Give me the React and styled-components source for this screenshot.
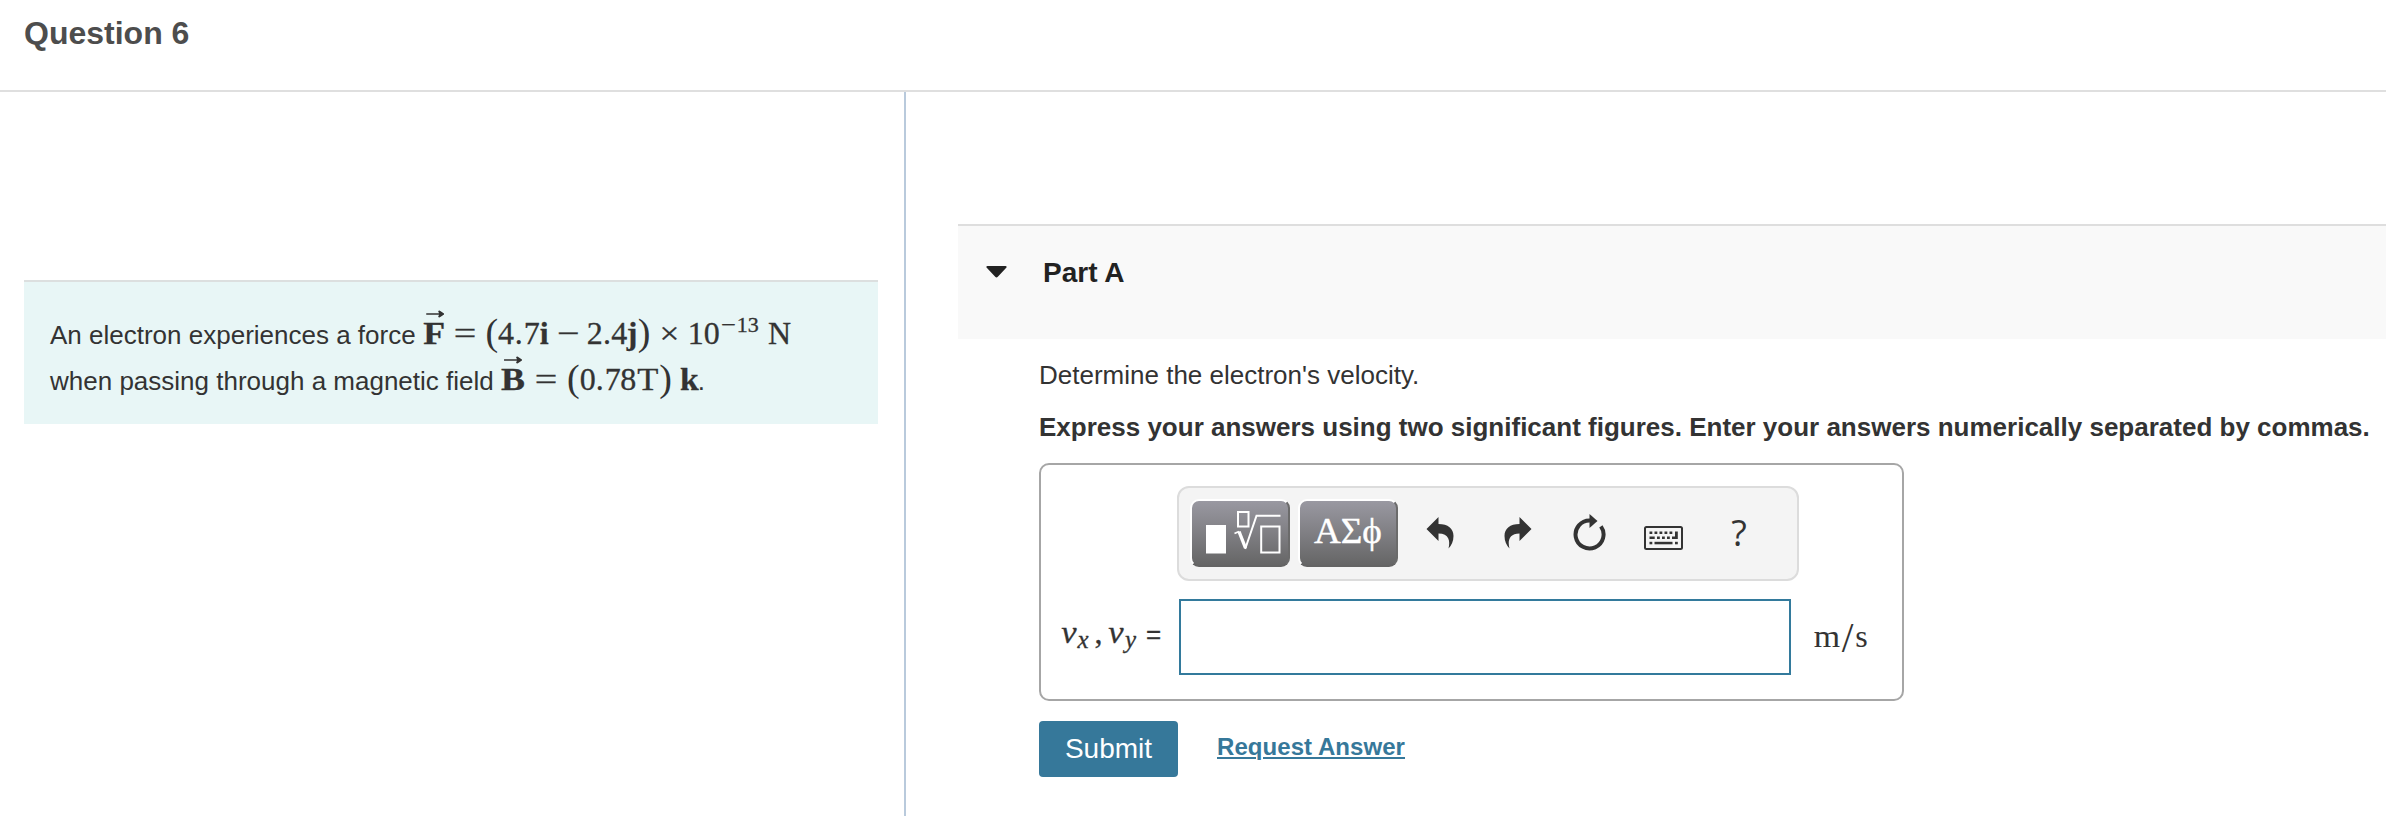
import React from "react";
import styled, { createGlobalStyle } from "styled-components";

const Global = createGlobalStyle`
  * { box-sizing: border-box; }
  body {
    margin: 0;
    background: #fff;
    color: #333;
    font-family: "Liberation Sans", Arial, sans-serif;
    font-size: 26px;
    overflow: hidden;
  }
  p { margin: 0; }
`;

const Page = styled.div`
  display: flex;
  flex-direction: column;
  height: 816px;
`;

const Header = styled.header`
  height: 92px;
  padding-left: 24px;
  border-bottom: 2px solid #dfdfdf;
`;

const Title = styled.h1`
  margin: 0;
  font-size: 32px;
  line-height: 66px;
  color: #4d4d4d;
`;

const Columns = styled.main`
  flex: 1;
  display: flex;
`;

const ProblemColumn = styled.section`
  width: 906px;
  flex: none;
  padding: 188px 0 0 24px;
  border-right: 2px solid #b9cadc;
`;

const ProblemBox = styled.div`
  width: 854px;
  height: 144px;
  padding: 30px 26px 0;
  background: #e8f6f6;
  border-top: 2px solid #dcdfdf;
`;

const ProblemLine = styled.p`
  height: 46px;
  line-height: 46px;
  white-space: nowrap;
`;

const Formula = styled.span`
  line-height: 0;
  font-family: "Liberation Serif", "Times New Roman", serif;
  font-size: 32px;
  -webkit-text-stroke: 0.3px currentColor;
`;

const Token = styled.span`
  display: inline-block;
  width: ${(p) => p.$w}px;
  text-align: ${(p) => p.$align || "center"};
  font-weight: ${(p) => (p.$bold ? 700 : 400)};
  font-style: ${(p) => (p.$italic ? "italic" : "normal")};
  transform: scaleX(${(p) => p.$stretch || 1});
`;

const Paren = styled(Token)`
  font-size: 38px;
  vertical-align: -1px;
  -webkit-text-stroke: 0;
`;

const Sup = styled(Token)`
  font-size: 22px;
  vertical-align: 12px;
`;

const Sub = styled(Token)`
  font-size: 25px;
  vertical-align: -5px;
  font-style: italic;
`;

const Vector = styled(Token)`
  position: relative;
  font-weight: 700;
`;

const VectorMark = styled.svg`
  position: absolute;
  left: ${(p) => p.$left}px;
  bottom: 15px;
  width: 16px;
  height: 8px;
`;

const AnswerColumn = styled.section`
  flex: 1;
  min-width: 0;
  padding: 132px 0 0 52px;
`;

const PartHeader = styled.div`
  display: flex;
  align-items: flex-start;
  gap: 36px;
  height: 115px;
  padding: 26px 0 0 28px;
  background: #f9f9f9;
  border-top: 2px solid #dedede;
`;

const Caret = styled.svg`
  width: 21px;
  height: 12px;
  margin-top: 14px;
`;

const PartTitle = styled.h2`
  margin: 0;
  font-size: 28px;
  line-height: 41px;
  color: #222;
`;

const PartBody = styled.div`
  padding: 21px 0 0 81px;
`;

const Prompt = styled.p`
  line-height: 30px;
  white-space: nowrap;
`;

const Instruction = styled(Prompt)`
  margin-top: 22px;
  font-weight: 700;
`;

const AnswerBox = styled.div`
  width: 865px;
  height: 238px;
  margin-top: 21px;
  padding-top: 21px;
  border: 2px solid #a6a6a6;
  border-radius: 10px;
`;

const Toolbar = styled.div`
  display: flex;
  align-items: flex-start;
  width: 622px;
  height: 95px;
  margin-left: 136px;
  padding: 11px 0 0 11px;
  background: #f4f4f4;
  border: 2px solid #dcdcdc;
  border-radius: 12px;
`;

const PaletteButton = styled.button`
  display: flex;
  align-items: center;
  justify-content: center;
  width: 100px;
  height: 68px;
  margin: 0 8px 0 0;
  padding: ${(p) => p.$pad};
  color: #fff;
  background: linear-gradient(#9b9aa3, #646464) border-box;
  border: 2px solid;
  border-color: #fff #6b6b6b #646464 #fff;
  border-radius: 9px;
`;

const GreekLabel = styled.span`
  font-family: "Liberation Serif", serif;
  font-size: 36px;
  line-height: 36px;
  transform: scaleX(1.03);
  -webkit-text-stroke: 0.4px #fff;
`;

const IconButton = styled.button`
  display: flex;
  align-items: center;
  justify-content: center;
  flex: none;
  width: ${(p) => p.$w}px;
  height: 68px;
  padding: ${(p) => p.$pad || 0};
  border: 0;
  background: none;
  color: #333;
  font-family: "Open Sans", sans-serif;
  font-size: 36px;
`;

const AnswerRow = styled.div`
  display: flex;
  height: 76px;
  margin-top: 18px;
`;

const VariableLabel = styled.label`
  width: 138px;
  padding-left: 20px;
  line-height: 70px;
  white-space: nowrap;
`;

const Equals = styled.span`
  margin-left: 9px;
  -webkit-text-stroke: 0.3px currentColor;
`;

const AnswerInput = styled.input`
  width: 612px;
  height: 76px;
  padding: 0 10px;
  border: 2px solid #337a9c;
  border-radius: 0;
  background: #fff;
  font-size: 28px;
`;

const Unit = styled.span`
  margin-left: 22px;
  line-height: 74px;
  font-family: "Liberation Serif", serif;
  font-size: 32px;
  white-space: nowrap;
`;

const Slash = styled(Token)`
  font-size: 42px;
  line-height: 0;
  vertical-align: -5px;
`;

const Actions = styled.div`
  display: flex;
  margin-top: 20px;
`;

const SubmitButton = styled.button`
  width: 139px;
  height: 56px;
  padding: 0;
  border: 0;
  border-radius: 4px;
  background: #36789a;
  color: #fff;
  font-family: inherit;
  font-size: 28px;
  line-height: 56px;
`;

const RequestLink = styled.a`
  margin-left: 39px;
  line-height: 51px;
  font-size: 24px;
  letter-spacing: 0.06px;
  font-weight: 700;
  color: #36789a;
  text-decoration: underline;
  text-decoration-thickness: 1.5px;
  text-underline-offset: 2px;
`;

const Vec = ({ left }) => (
  <VectorMark $left={left} viewBox="0 0 16 8">
    <path d="M0 3.200H11.500L10.700 1 12 .5 16 3.500V4.500L12 7.500 10.700 7 11.500 4.800H0Z" fill="#333" />
  </VectorMark>
);

const TemplatesIcon = () => (
  <svg width="76" height="44" viewBox="0 0 76 44" fill="none" stroke="#fff">
    <rect x="1" y="15" width="20" height="28.500" fill="#fff" stroke="none" />
    <rect x="33" y="2" width="10.500" height="14.500" strokeWidth="2" />
    <path d="M29.500 23.500L34 21.500" strokeWidth="1.800" />
    <path d="M34 21.500L40.500 38" strokeWidth="3.400" />
    <path d="M40.200 39L51.500 5.800H75.500" strokeWidth="2" />
    <rect x="56.200" y="16.500" width="18.300" height="26" strokeWidth="2" />
  </svg>
);

const HistoryArrow = ({ flip }) => (
  <svg width="28" height="34" viewBox="0 0 28 34">
    <path
      transform={flip ? "translate(28 0) scale(-1 1)" : undefined}
      d="M.5 13L12.500 1V8C22 8 27.500 12.500 27.500 20C27.500 25 25.500 29.500 22.500 32.500C24.500 25 23 17.500 12.500 17.500V25Z"
      fill="#333"
    />
  </svg>
);

const ResetIcon = () => (
  <svg width="34" height="38" viewBox="0 0 34 38">
    <path d="M27.900 12.300A14 14 0 1 1 17 6.500" fill="none" stroke="#333" strokeWidth="4" />
    <path d="M16.500 0L24.500 7L16.500 14Z" fill="#333" />
  </svg>
);

const KeyboardIcon = () => (
  <svg width="39" height="24" viewBox="0 0 39 24" fill="#333">
    <rect x="1" y="1" width="37" height="22" rx="1.500" fill="none" stroke="#333" strokeWidth="2" />
    {[5.5, 10.500, 15.500, 20.500, 25.500].map((x) => (
      <rect key={x} x={x} y="5.500" width="2.800" height="2.500" />
    ))}
    <path d="M31 5.500H33.800V13H28V10.500H31Z" />
    <rect x="5.500" y="10.500" width="5.200" height="2.500" />
    {[13, 18, 23].map((x) => (
      <rect key={x} x={x} y="10.500" width="2.800" height="2.500" />
    ))}
    <rect x="5.500" y="15.800" width="2.800" height="2.500" />
    <rect x="10.500" y="15.800" width="18" height="2.500" />
    <rect x="31" y="15.800" width="2.800" height="2.500" />
  </svg>
);

export default function App() {
  return (
    <>
      <Global />
      <Page>
        <Header>
          <Title>Question 6</Title>
        </Header>
        <Columns>
          <ProblemColumn>
            <ProblemBox>
              <ProblemLine>
                {"An electron experiences a force "}
                <Formula>
                  <Vector $w={22.500} $stretch={1.120}>F<Vec left={4} /></Vector>
                  <Token $w={40} $stretch={1.250}>=</Token>
                  <Paren $w={12.600}>(</Paren>
                  <Token $w={16}>4</Token>
                  <Token $w={9.700}>.</Token>
                  <Token $w={16}>7</Token>
                  <Token $w={9} $bold>i</Token>
                  <Token $w={38} $stretch={1.250}>−</Token>
                  <Token $w={16}>2</Token>
                  <Token $w={8.500}>.</Token>
                  <Token $w={15.500}>4</Token>
                  <Token $w={11} $bold>j</Token>
                  <Paren $w={13}>)</Paren>
                  <Token $w={37} $stretch={1.100}>×</Token>
                  <Token $w={16}>1</Token>
                  <Token $w={16}>0</Token>
                  <Sup $w={17} $stretch={1.200}>−</Sup>
                  <Sup $w={11}>1</Sup>
                  <Sup $w={11}>3</Sup>
                  <Token $w={42}>N</Token>
                </Formula>
              </ProblemLine>
              <ProblemLine>
                {"when passing through a magnetic field "}
                <Formula>
                  <Vector $w={24} $stretch={1.120}>B<Vec left={4} /></Vector>
                  <Token $w={42} $stretch={1.250}>=</Token>
                  <Paren $w={12.700}>(</Paren>
                  <Token $w={15}>0</Token>
                  <Token $w={10}>.</Token>
                  <Token $w={15.500}>7</Token>
                  <Token $w={15.500}>8</Token>
                  <Token $w={23.500} $stretch={1.080}>T</Token>
                  <Paren $w={12.500}>)</Paren>
                  <Token $w={26} $bold $align="right" $stretch={1.050}>k</Token>
                </Formula>
                .
              </ProblemLine>
            </ProblemBox>
          </ProblemColumn>
          <AnswerColumn>
            <PartHeader>
              <Caret viewBox="0 0 21 12">
                <path d="M1.500 0H19.500Q21.500 .5 20 2L11.800 10.800Q10.500 12 9.200 10.800L1 2Q-.5 .5 1.500 0Z" fill="#222" />
              </Caret>
              <PartTitle>Part A</PartTitle>
            </PartHeader>
            <PartBody>
              <Prompt>Determine the electron's velocity.</Prompt>
              <Instruction>
                Express your answers using two significant figures. Enter your answers numerically separated by commas.
              </Instruction>
              <AnswerBox>
                <Toolbar>
                  <PaletteButton $pad="0 0 3px 5px" aria-label="Templates"><TemplatesIcon /></PaletteButton>
                  <PaletteButton $pad="0 0 5px" aria-label="Symbols"><GreekLabel>ΑΣϕ</GreekLabel></PaletteButton>
                  <IconButton $w={68} aria-label="Undo"><HistoryArrow /></IconButton>
                  <IconButton $w={87} aria-label="Redo"><HistoryArrow flip /></IconButton>
                  <IconButton $w={58} aria-label="Reset"><ResetIcon /></IconButton>
                  <IconButton $w={89} $pad="9px 0 0" aria-label="Keyboard"><KeyboardIcon /></IconButton>
                  <IconButton $w={62} $pad="0 0 2px" aria-label="Help">?</IconButton>
                </Toolbar>
                <AnswerRow>
                  <VariableLabel htmlFor="answer">
                    <Formula>
                      <Token $w={16} $italic $stretch={1.080}>v</Token>
                      <Sub $w={12}>x</Sub>
                      <Token $w={19}>,</Token>
                      <Token $w={16} $italic $stretch={1.080}>v</Token>
                      <Sub $w={13}>y</Sub>
                    </Formula>
                    <Equals>=</Equals>
                  </VariableLabel>
                  <AnswerInput id="answer" />
                  <Unit>
                    <Token $w={28} $stretch={1.060}>m</Token>
                    <Slash $w={13}>/</Slash>
                    <Token $w={15}>s</Token>
                  </Unit>
                </AnswerRow>
              </AnswerBox>
              <Actions>
                <SubmitButton>Submit</SubmitButton>
                <RequestLink>Request Answer</RequestLink>
              </Actions>
            </PartBody>
          </AnswerColumn>
        </Columns>
      </Page>
    </>
  );
}
